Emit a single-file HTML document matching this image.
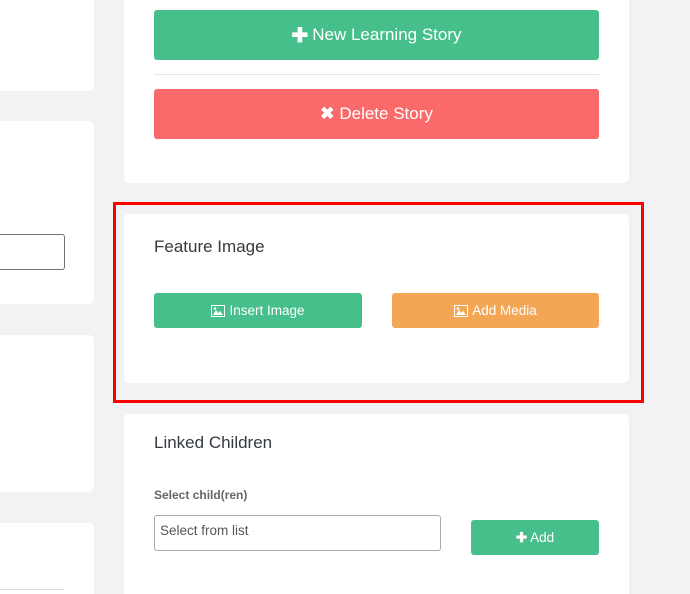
<!DOCTYPE html>
<html style="overflow:hidden;height:594px"><head><style>
body{margin:0;width:690px;height:594px;background:#f1f2f4;position:relative;overflow:hidden;font-family:"Liberation Sans",sans-serif}
.c{position:absolute;background:#fff;border-radius:5px}
.b{position:absolute;color:#fff;border-radius:3px;display:flex;align-items:center;justify-content:center}
.t{position:absolute;color:#343a40;font-size:17px}
svg{margin-right:4px}
</style></head><body>
<div class="c" style="left:-10px;top:-10px;width:104px;height:101px"></div>
<div class="c" style="left:-10px;top:121px;width:104px;height:183px"></div>
<div style="position:absolute;left:-5px;top:234px;width:68px;height:34px;border:1px solid #6c757d;border-radius:3px"></div>
<div class="c" style="left:-10px;top:335px;width:104px;height:157px"></div>
<div class="c" style="left:-10px;top:523px;width:104px;height:71px;border-radius:5px 5px 0 0"></div>
<div style="position:absolute;left:0;top:589px;width:64px;height:1px;background:#ddd"></div>

<div class="c" style="left:124px;top:-10px;width:505px;height:193px"></div>
<div class="b" style="left:154px;top:10px;width:445px;height:50px;background:#47bf8a;font-size:17px"><b style="font-size:20px;margin-right:4px">✚</b>New Learning Story</div>
<div style="position:absolute;left:154px;top:74px;width:445px;height:1px;background:#e6e6e6"></div>
<div class="b" style="left:154px;top:89px;width:445px;height:50px;background:#fa6a6a;font-size:17px"><b style="margin-right:5px">✖</b>Delete Story</div>

<div style="position:absolute;left:113px;top:202px;width:525px;height:195px;border:3px solid #f00"></div>
<div class="c" style="left:124px;top:214px;width:505px;height:169px"></div>
<div class="t" style="left:154px;top:237px">Feature Image</div>
<div class="b" style="left:154px;top:293px;width:208px;height:35px;background:#47bf8a;font-size:13.5px"><svg width="14" height="12" viewBox="0 0 14 12"><rect x="0.5" y="0.5" width="13" height="11" fill="none" stroke="#fff"/><path d="M2 10L5 5L7 8L9 6L12 10Z" fill="#fff"/><circle cx="4" cy="3.5" r="1.3" fill="#fff"/></svg>Insert Image</div>
<div class="b" style="left:392px;top:293px;width:207px;height:35px;background:#f3a656;font-size:13.5px"><svg width="14" height="12" viewBox="0 0 14 12"><rect x="0.5" y="0.5" width="13" height="11" fill="none" stroke="#fff"/><path d="M2 10L5 5L7 8L9 6L12 10Z" fill="#fff"/><circle cx="4" cy="3.5" r="1.3" fill="#fff"/></svg>Add Media</div>

<div class="c" style="left:124px;top:414px;width:505px;height:180px;border-radius:5px 5px 0 0"></div>
<div class="t" style="left:154px;top:433px">Linked Children</div>
<div style="position:absolute;left:154px;top:488px;font-size:12px;font-weight:bold;color:#666">Select child(ren)</div>
<div style="position:absolute;left:154px;top:515px;width:285px;height:34px;border:1px solid #aaa;border-radius:3px;font-size:13.5px;color:#555"><span style="position:absolute;left:5px;top:7px">Select from list</span></div>
<div class="b" style="left:471px;top:520px;width:128px;height:35px;background:#47bf8a;font-size:13.5px"><b style="margin-right:3px">✚</b>Add</div>
</body></html>
